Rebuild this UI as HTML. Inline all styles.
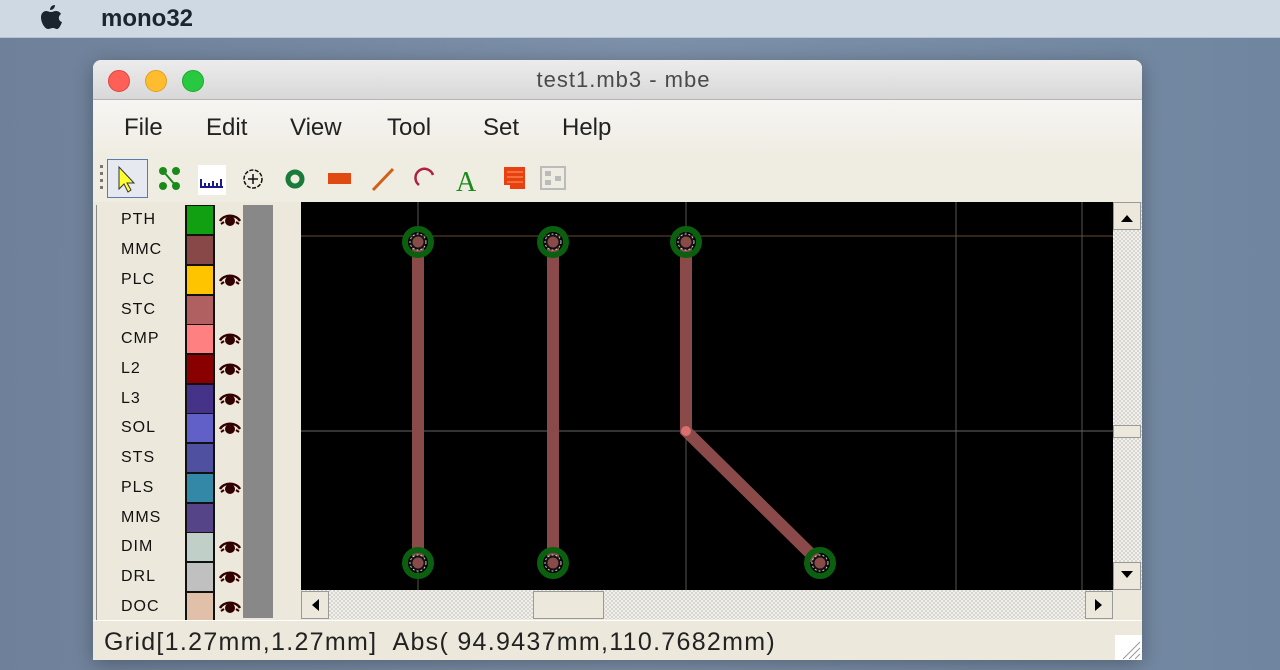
<!DOCTYPE html>
<html><head><style>
*{margin:0;padding:0;box-sizing:border-box}
body{width:1280px;height:670px;overflow:hidden;background:linear-gradient(90deg,#6f819a,#7d90a9 50%,#7086a0);font-family:"Liberation Sans",sans-serif;position:relative}
.top{position:absolute;left:0;top:0;width:1280px;height:38px;background:#cfd9e4;border-bottom:1px solid #b8c3d0}
.top b{position:absolute;left:101px;top:5px;font-size:24px;color:#1c2430;font-weight:bold}
.win{position:absolute;left:93px;top:60px;width:1049px;height:600px;background:#ece9dc;border-radius:8px 8px 0 0;overflow:hidden;box-shadow:0 4px 20px rgba(0,0,0,.3)}
.title{height:40px;background:linear-gradient(#ececec,#d8d8d8);border-bottom:1px solid #b5b5b5;text-align:center;font-size:22px;letter-spacing:1px;color:#4a4a4a;line-height:40px;padding-left:12px}
.dot{position:absolute;top:10px;width:22px;height:22px;border-radius:50%}
.menu{position:absolute;top:40px;left:0;width:1049px;height:57px;background:linear-gradient(#f6f5f2,#efece2)}
.menu span{position:absolute;top:14px;font-size:24px;color:#222}
.tb{position:absolute;top:97px;left:0;width:1049px;height:45px;background:#efece2}
.lp{position:absolute;left:3px;top:145px;width:205px;height:415px;background:#ece9dc;border-left:1px solid #888}
.row{position:absolute;left:0;height:30px;width:200px}
.row i{position:absolute;left:24px;top:6px;font-style:normal;font-size:16px;letter-spacing:1px;color:#111}
.row s{position:absolute;left:88px;top:0;width:30px;height:30px;border:2px solid #111;border-top-width:1px;border-bottom-width:1px}
.row u{position:absolute;left:122px;top:5px;}
.gray{position:absolute;left:150px;top:145px;width:30px;height:413px;background:#888}
</style></head><body>
<div class="top"><svg style="position:absolute;left:38px;top:4px" width="26" height="28" viewBox="0 0 26 28"><path d="M17 1c0 3-2 5-5 5 0-3 2-5 5-5zM13 8c2 0 3-1 5-1 2 0 4 1 5 3-3 2-3 7 1 8-1 3-3 7-5 7-2 0-2-1-4-1s-3 1-5 1c-3 0-7-6-7-12 0-4 3-6 5-6 2 0 3 1 5 1z" fill="#1c2430"/></svg><b>mono32</b></div>
<div class="win">
<div class="title">test1.mb3 - mbe</div>
<div class="dot" style="left:15px;background:#fe5f57;border:1px solid #e0443e"></div>
<div class="dot" style="left:52px;background:#febc2e;border:1px solid #dea123"></div>
<div class="dot" style="left:89px;background:#28c840;border:1px solid #1aab29"></div>
<div class="menu"><span style="left:31px">File</span><span style="left:113px">Edit</span><span style="left:197px">View</span><span style="left:294px">Tool</span><span style="left:390px">Set</span><span style="left:469px">Help</span></div>
<div class="tb">
<svg width="560" height="45" style="position:absolute;left:0;top:0">
<g fill="#777"><rect x="7" y="8" width="3" height="3"/><rect x="7" y="15" width="3" height="3"/><rect x="7" y="22" width="3" height="3"/><rect x="7" y="29" width="3" height="3"/></g>
<rect x="14.5" y="2.5" width="40" height="38" fill="#e6eaf0" stroke="#5a7ab0"/>
<path d="M26 10 L26 32 L31 27 L35 35 L38 33 L34 26 L41 26 Z" fill="#ff3" stroke="#333"/>
<g fill="#1a8a1a"><circle cx="70" cy="14" r="4"/><circle cx="83" cy="14" r="4"/><circle cx="70" cy="29" r="4"/><circle cx="83" cy="29" r="4"/><path d="M70 14L83 29" stroke="#1a8a1a" stroke-width="2"/></g>
<rect x="105" y="8" width="28" height="30" fill="#fff"/><path d="M107 30H130M108 22v8M112 26v4M116 26v4M120 24v6M124 26v4M128 22v8" stroke="#1a1a8a" stroke-width="2"/>
<circle cx="160" cy="22" r="9" fill="none" stroke="#111" stroke-width="1.5" stroke-dasharray="4 1.5"/><path d="M155 22h10M160 17v10" stroke="#111" stroke-width="1.5"/>
<circle cx="202" cy="22" r="7" fill="none" stroke="#1a7a3a" stroke-width="5"/>
<rect x="235" y="16" width="23" height="11" fill="#e04a10"/>
<path d="M280 33 L300 12" stroke="#d0601a" stroke-width="3"/>
<path d="M340 18 A9 9 0 1 0 326 28" fill="none" stroke="#b02040" stroke-width="2.5"/>
<text x="363" y="34" font-family="Liberation Serif" font-size="28" fill="#1a8a1a">A</text>
<rect x="411" y="10" width="21" height="22" fill="#e84010"/><path d="M414 15h16M414 20h16M414 25h16" stroke="#ffa060"/><rect x="405" y="28" width="12" height="8" fill="#efece2"/>
<rect x="448" y="10" width="24" height="22" fill="none" stroke="#bbb" stroke-width="2"/><rect x="452" y="14" width="6" height="5" fill="#bbb"/><rect x="452" y="23" width="6" height="5" fill="#bbb"/><rect x="462" y="19" width="6" height="5" fill="#bbb"/>
</svg></div>
<div class="lp">
<div class="row" style="top:0"><i>PTH</i><s style="background:#11a011"></s><u></u></div>
<div class="row" style="top:30px"><i>MMC</i><s style="background:#884848"></s></div>
<div class="row" style="top:60px"><i>PLC</i><s style="background:#ffc400"></s><u></u></div>
<div class="row" style="top:90px"><i>STC</i><s style="background:#b06060"></s></div>
<div class="row" style="top:119px"><i>CMP</i><s style="background:#ff8080"></s><u></u></div>
<div class="row" style="top:149px"><i>L2</i><s style="background:#880000"></s><u></u></div>
<div class="row" style="top:179px"><i>L3</i><s style="background:#443388"></s><u></u></div>
<div class="row" style="top:208px"><i>SOL</i><s style="background:#6060c8"></s><u></u></div>
<div class="row" style="top:238px"><i>STS</i><s style="background:#5050a0"></s></div>
<div class="row" style="top:268px"><i>PLS</i><s style="background:#3388a8"></s><u></u></div>
<div class="row" style="top:298px"><i>MMS</i><s style="background:#554488"></s></div>
<div class="row" style="top:327px"><i>DIM</i><s style="background:#c0d0c8"></s><u></u></div>
<div class="row" style="top:357px"><i>DRL</i><s style="background:#c0c0c0"></s><u></u></div>
<div class="row" style="top:387px"><i>DOC</i><s style="background:#e0c0a8"></s><u></u></div>
</div>
<svg style="position:absolute;left:0;top:0;width:0;height:0"><defs><symbol id="eye" viewBox="0 0 24 16"><path d="M2 9C6 2 18 2 22 9" fill="none" stroke="#300" stroke-width="2.5"/><ellipse cx="12" cy="9" rx="5" ry="5" fill="#300"/><path d="M3 12l3-2M21 12l-3-2" stroke="#300" stroke-width="2"/></symbol></defs></svg>
<div class="gray"></div>
<div style="position:absolute;left:125px;top:152px">
<svg width="24" height="16" style="position:absolute;top:0"><use href="#eye"/></svg>
<svg width="24" height="16" style="position:absolute;top:60px"><use href="#eye"/></svg>
<svg width="24" height="16" style="position:absolute;top:119px"><use href="#eye"/></svg>
<svg width="24" height="16" style="position:absolute;top:149px"><use href="#eye"/></svg>
<svg width="24" height="16" style="position:absolute;top:179px"><use href="#eye"/></svg>
<svg width="24" height="16" style="position:absolute;top:208px"><use href="#eye"/></svg>
<svg width="24" height="16" style="position:absolute;top:268px"><use href="#eye"/></svg>
<svg width="24" height="16" style="position:absolute;top:327px"><use href="#eye"/></svg>
<svg width="24" height="16" style="position:absolute;top:357px"><use href="#eye"/></svg>
<svg width="24" height="16" style="position:absolute;top:387px"><use href="#eye"/></svg>
</div>
<svg style="position:absolute;left:208px;top:142px" width="841" height="418">
<rect x="0" y="0" width="841" height="418" fill="#ece9dc"/>
<rect x="0" y="0" width="812" height="388" fill="#000"/>
<defs><pattern id="ck" width="4" height="4" patternUnits="userSpaceOnUse"><rect width="4" height="4" fill="#f2f0ea"/><rect width="2" height="2" fill="#d8d6d0"/><rect x="2" y="2" width="2" height="2" fill="#d8d6d0"/></pattern></defs>
<path d="M117 0V388M385 0V388M655 0V388M781 0V388" stroke="#555" stroke-width="1"/>
<path d="M0 34H812" stroke="#6a4a30"/><path d="M0 229H812" stroke="#666"/>
<g stroke="#8b4a4a" stroke-width="12" fill="none"><path d="M117 40V361M252 40V361M385 40V229L519 361"/></g>
<g fill="none" stroke="#0b6010" stroke-width="6"><circle cx="117" cy="40" r="13"/><circle cx="252" cy="40" r="13"/><circle cx="385" cy="40" r="13"/><circle cx="117" cy="361" r="13"/><circle cx="252" cy="361" r="13"/><circle cx="519" cy="361" r="13"/></g>
<g fill="#111" stroke="#ccc" stroke-dasharray="2 2"><circle cx="117" cy="40" r="8"/><circle cx="252" cy="40" r="8"/><circle cx="385" cy="40" r="8"/><circle cx="117" cy="361" r="8"/><circle cx="252" cy="361" r="8"/><circle cx="519" cy="361" r="8"/></g>
<g fill="#8b4a4a"><circle cx="117" cy="40" r="5.5"/><circle cx="252" cy="40" r="5.5"/><circle cx="385" cy="40" r="5.5"/><circle cx="117" cy="361" r="5.5"/><circle cx="252" cy="361" r="5.5"/><circle cx="519" cy="361" r="5.5"/></g>
<circle cx="385" cy="229" r="5" fill="#d87070"/>
<rect x="812" y="0" width="29" height="388" fill="url(#ck)"/>
<rect x="0" y="388" width="812" height="29" fill="url(#ck)"/>
<g fill="#ece9dc" stroke="#999"><rect x="812.5" y="0.5" width="27" height="27"/><rect x="812.5" y="360.5" width="27" height="27"/><rect x="812.5" y="223.5" width="27" height="12"/><rect x="0.5" y="389.5" width="27" height="27"/><rect x="784.5" y="389.5" width="27" height="27"/><rect x="232.5" y="389.5" width="70" height="27"/></g>
<path d="M820 20h12l-6-7z M820 369h12l-6 7z M18 397v12l-7-6z M794 397v12l7-6z" fill="#000"/>
</svg>
<div style="position:absolute;left:0;top:560px;width:1049px;height:40px;background:#ece9dc;border-top:1px solid #fff;font-size:25px;letter-spacing:1.3px;color:#222;padding:7px 0 0 11px;white-space:pre">Grid[1.27mm,1.27mm]  Abs( 94.9437mm,110.7682mm)</div>
<div style="position:absolute;left:1022px;top:575px;width:27px;height:25px;background:#fff"><svg width="27" height="25"><path d="M8 24L25 7M14 24L25 13M20 24L25 19" stroke="#999"/></svg></div>
</div>
</body></html>
